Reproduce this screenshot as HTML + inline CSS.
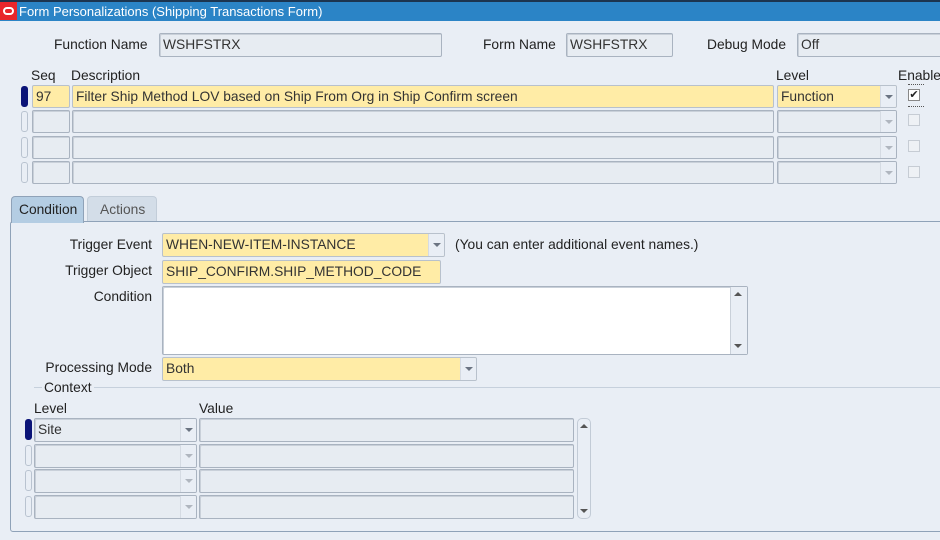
<!DOCTYPE html>
<html><head><style>
*{margin:0;padding:0;box-sizing:border-box}
body{width:940px;height:540px;overflow:hidden;background:#e9eef5;font-family:"Liberation Sans",sans-serif;font-size:13.8px;color:#222;position:relative}
.a{position:absolute;white-space:nowrap}
.f{position:absolute;border:1px solid #a9b3c0;border-radius:2px;background:#e7ecf2;box-shadow:inset 1px 1px 0 #c9d0d9;padding:3px 0 0 3px;color:#333;white-space:nowrap;overflow:hidden}
.y{background:#ffeca6;box-shadow:none;border-color:#b8c1cc}
.w{background:#fff}
.r{text-align:right}
.dd{position:absolute;right:0;top:0;bottom:0;width:16px;background:#e9eef5;border-left:1px solid #d5dbe3}
.dd:after{content:"";position:absolute;left:4px;top:9px;border-left:4px solid transparent;border-right:4px solid transparent;border-top:4px solid #6b7482}
.dd.g:after{border-top-color:#b0b6bf}
.ind{position:absolute;width:7px;border:1px solid #b9c3d0;border-radius:3px;background:#e9eef5}
.ind.on{background:#0b1478;border-color:#0b1478}
.cb{position:absolute;width:12px;height:12px;border:1px solid #c6ccd4;background:#eef1f5}
</style></head><body>
<div class="a" style="left:0;top:0;width:940px;height:2px;background:#1c3550"></div>
<div class="a" style="left:0;top:2px;width:940px;height:19px;background:#2b84c6"></div>
<div class="a" style="left:0;top:2px;width:17px;height:18px;background:#e8262b"></div>
<div class="a" style="left:3px;top:7px;width:11px;height:8px;border:2px solid #fff;border-radius:4px"></div>
<div class="a" style="left:19px;top:4px;color:#fff;font-size:13px">Form Personalizations (Shipping Transactions Form)</div>

<div class="a" style="left:54px;top:37px">Function Name</div>
<div class="f" style="left:159px;top:33px;width:283px;height:24px">WSHFSTRX</div>
<div class="a" style="left:483px;top:37px">Form Name</div>
<div class="f" style="left:566px;top:33px;width:107px;height:24px">WSHFSTRX</div>
<div class="a" style="left:707px;top:37px">Debug Mode</div>
<div class="f" style="left:797px;top:33px;width:150px;height:24px">Off</div>

<div class="a" style="left:31px;top:68px">Seq</div>
<div class="a" style="left:71px;top:68px">Description</div>
<div class="a" style="left:776px;top:68px">Level</div>
<div class="a" style="left:898px;top:68px">Enable</div>

<div class="ind on" style="left:21px;top:86px;height:21px"></div>
<div class="f y" style="left:32px;top:85px;width:38px;height:23px">97</div>
<div class="f y" style="left:72px;top:85px;width:702px;height:23px">Filter Ship Method LOV based on Ship From Org in Ship Confirm screen</div>
<div class="f y" style="left:777px;top:85px;width:120px;height:23px">Function<div class="dd"></div></div>
<div class="a" style="left:908px;top:84px;width:16px;border-top:1px dotted #555"></div>
<div class="cb" style="left:908px;top:89px;border-color:#888;background:#fff;font-size:11px;line-height:10px;text-align:center">✔</div>
<div class="a" style="left:908px;top:106px;width:16px;border-top:1px dotted #555"></div>

<div class="ind" style="left:21px;top:111px;height:21px"></div>
<div class="f" style="left:32px;top:110px;width:38px;height:23px"></div>
<div class="f" style="left:72px;top:110px;width:702px;height:23px"></div>
<div class="f" style="left:777px;top:110px;width:120px;height:23px"><div class="dd g"></div></div>
<div class="cb" style="left:908px;top:114px"></div>
<div class="ind" style="left:21px;top:137px;height:21px"></div>
<div class="f" style="left:32px;top:136px;width:38px;height:23px"></div>
<div class="f" style="left:72px;top:136px;width:702px;height:23px"></div>
<div class="f" style="left:777px;top:136px;width:120px;height:23px"><div class="dd g"></div></div>
<div class="cb" style="left:908px;top:140px"></div>
<div class="ind" style="left:21px;top:162px;height:21px"></div>
<div class="f" style="left:32px;top:161px;width:38px;height:23px"></div>
<div class="f" style="left:72px;top:161px;width:702px;height:23px"></div>
<div class="f" style="left:777px;top:161px;width:120px;height:23px"><div class="dd g"></div></div>
<div class="cb" style="left:908px;top:166px"></div>

<div class="a" style="left:10px;top:221px;width:940px;height:311px;border:1px solid #8fa2b8;border-radius:3px;background:#e9eef5"></div>
<div class="a" style="left:11px;top:196px;width:73px;height:27px;background:#b4cde3;border:1px solid #8fa2b8;border-bottom:none;border-radius:4px 4px 0 0;padding:5px 0 0 7px">Condition</div>
<div class="a" style="left:87px;top:196px;width:70px;height:25px;background:#d3dde8;border:1px solid #c2cdd9;border-bottom:none;border-radius:4px 4px 0 0;padding:5px 0 0 12px;color:#555">Actions</div>

<div class="a r" style="left:30px;width:122px;top:237px">Trigger Event</div>
<div class="f y" style="left:162px;top:233px;width:283px;height:24px">WHEN-NEW-ITEM-INSTANCE<div class="dd"></div></div>
<div class="a" style="left:455px;top:237px">(You can enter additional event names.)</div>
<div class="a r" style="left:30px;width:122px;top:263px">Trigger Object</div>
<div class="f y" style="left:162px;top:260px;width:279px;height:24px">SHIP_CONFIRM.SHIP_METHOD_CODE</div>
<div class="a r" style="left:30px;width:122px;top:289px">Condition</div>
<div class="f w" style="left:162px;top:286px;width:586px;height:69px"></div>
<div class="a" style="left:730px;top:287px;width:17px;height:67px;background:#e9eef5;border-left:1px solid #c9d0d9"></div>
<div class="a" style="left:734px;top:292px;border-left:4px solid transparent;border-right:4px solid transparent;border-bottom:4px solid #555"></div>
<div class="a" style="left:734px;top:344px;border-left:4px solid transparent;border-right:4px solid transparent;border-top:4px solid #555"></div>
<div class="a r" style="left:20px;width:132px;top:360px">Processing Mode</div>
<div class="f y" style="left:162px;top:357px;width:315px;height:24px">Both<div class="dd"></div></div>

<div class="a" style="left:34px;top:387px;width:906px;border-top:1px solid #c6d0dc"></div>
<div class="a" style="left:42px;top:380px;background:#e9eef5;padding:0 2px">Context</div>
<div class="a" style="left:34px;top:401px">Level</div>
<div class="a" style="left:199px;top:401px">Value</div>

<div class="ind on" style="left:25px;top:419px;height:21px"></div>
<div class="f" style="left:34px;top:418px;width:163px;height:24px">Site<div class="dd"></div></div>
<div class="f" style="left:199px;top:418px;width:375px;height:24px"></div>
<div class="ind" style="left:25px;top:445px;height:21px"></div>
<div class="f" style="left:34px;top:444px;width:163px;height:24px"><div class="dd g"></div></div>
<div class="f" style="left:199px;top:444px;width:375px;height:24px"></div>
<div class="ind" style="left:25px;top:470px;height:21px"></div>
<div class="f" style="left:34px;top:469px;width:163px;height:24px"><div class="dd g"></div></div>
<div class="f" style="left:199px;top:469px;width:375px;height:24px"></div>
<div class="ind" style="left:25px;top:496px;height:21px"></div>
<div class="f" style="left:34px;top:495px;width:163px;height:24px"><div class="dd g"></div></div>
<div class="f" style="left:199px;top:495px;width:375px;height:24px"></div>
<div class="a" style="left:577px;top:418px;width:14px;height:101px;border:1px solid #c2cbd6;border-radius:5px;background:#e9eef5"></div>
<div class="a" style="left:580px;top:424px;border-left:4px solid transparent;border-right:4px solid transparent;border-bottom:4px solid #555"></div>
<div class="a" style="left:580px;top:509px;border-left:4px solid transparent;border-right:4px solid transparent;border-top:4px solid #555"></div>
</body></html>
